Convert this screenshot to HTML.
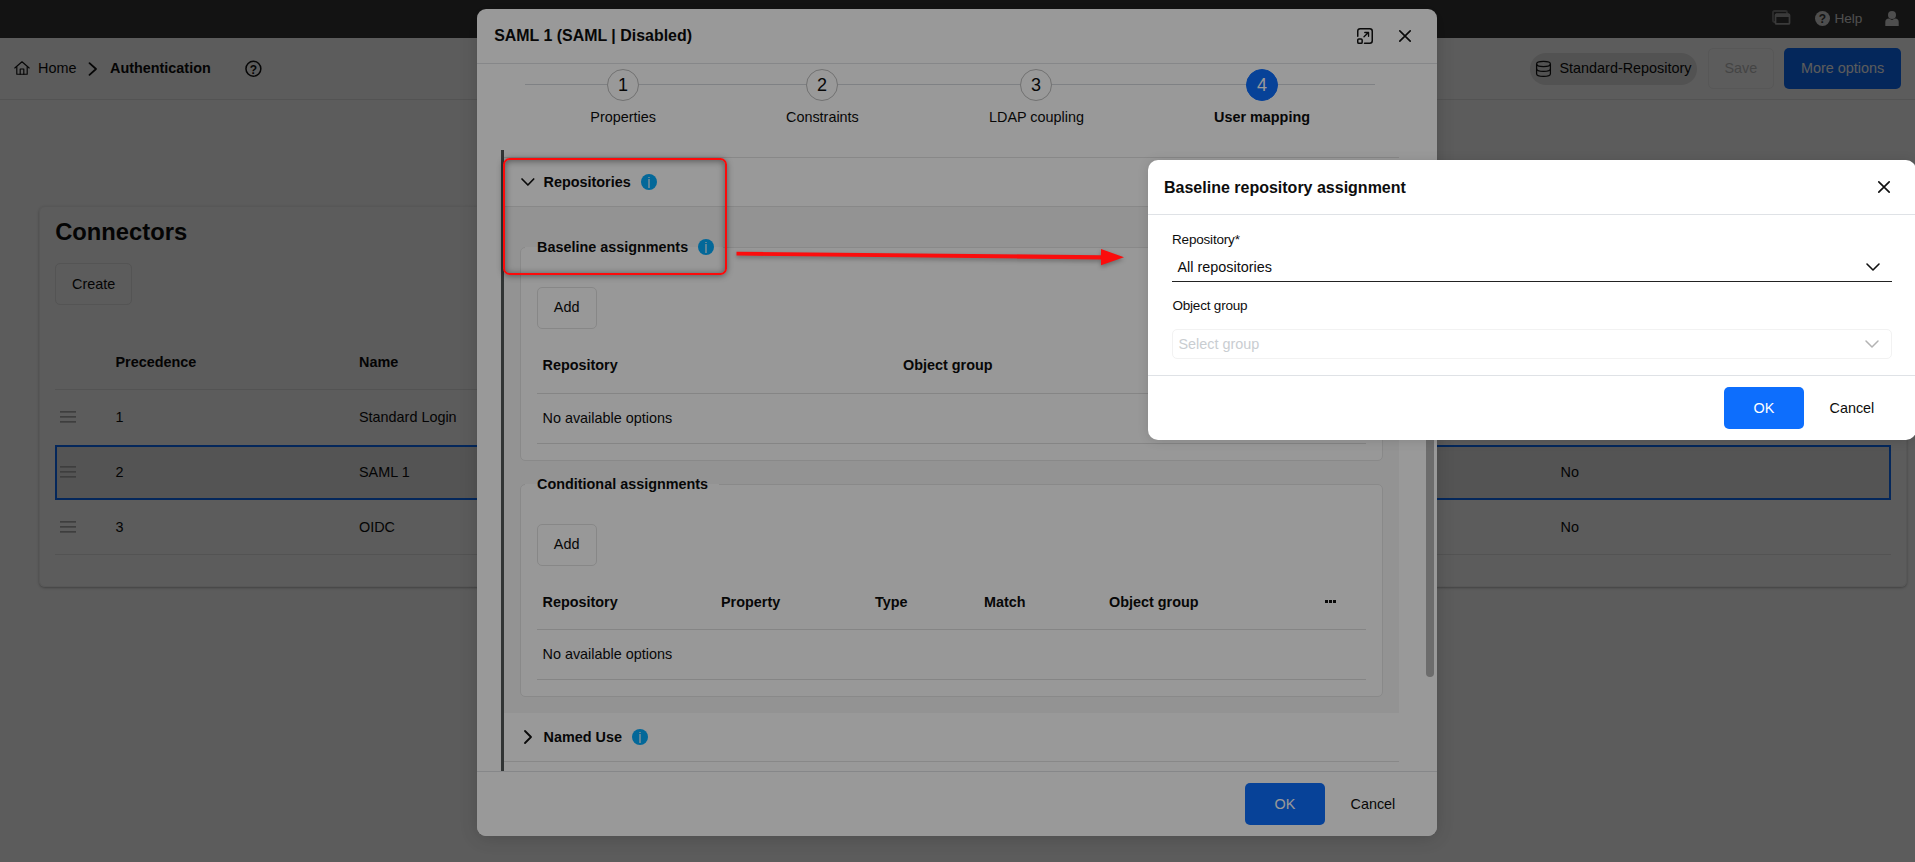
<!DOCTYPE html>
<html lang="en">
<head>
<meta charset="utf-8">
<title>Authentication</title>
<style>
*{box-sizing:border-box;margin:0;padding:0}
html,body{width:1915px;height:862px;overflow:hidden;background:#fff}
body{font-family:"Liberation Sans",sans-serif;font-size:14.4px;color:#0d0d0d;position:relative;line-height:1}
.abs{position:absolute}
.t{position:absolute;white-space:nowrap;line-height:1}
.b{font-weight:bold}
svg{position:absolute;overflow:visible}
/* ---------- page layer ---------- */
#topbar{position:absolute;left:0;top:0;width:1915px;height:38px;background:#383838}
#toolbar{position:absolute;left:0;top:38px;width:1915px;height:62px;border-bottom:1px solid #e6e6e6}
#card{position:absolute;left:39px;top:206px;width:1868px;height:381px;border:1px solid #f3f3f3;border-radius:6px;box-shadow:0 1px 2.5px rgba(0,0,0,.3)}
.btn{position:absolute;border:1px solid #e9e9e9;border-radius:5px;background:#fff}
.hl{position:absolute;height:1px;background:#e6e6e6}
.drag{position:absolute;width:16px;height:11.2px;background:linear-gradient(#adadad,#adadad) 0 0/16px 1.7px no-repeat,linear-gradient(#adadad,#adadad) 0 4.7px/16px 1.7px no-repeat,linear-gradient(#adadad,#adadad) 0 9.4px/16px 1.7px no-repeat}
.ov{position:absolute;left:0;top:0;width:1915px;height:862px;background:rgba(0,0,0,.4)}
/* ---------- modal 1 ---------- */
#m1{position:absolute;left:477px;top:9px;width:960px;height:827px;background:#fff;border-radius:9px;box-shadow:0 2px 18px rgba(0,0,0,.16);overflow:hidden}
#m1 .abs,#m1 .t,#m1 svg{position:absolute}
.step{position:absolute;top:60px;width:32px;height:32px;border-radius:50%;border:1px solid #bdbdbd;background:#fff;text-align:center;font-size:18px;line-height:30.4px}
.fs{position:absolute;border:1px solid #e5e5e5;border-radius:5px;background:#fdfdfd}
.leg{position:absolute;font-weight:bold;white-space:nowrap;line-height:1}
.info{position:absolute;width:16px;height:16px;border-radius:50%;background:#05adff}
.info:before{content:"";position:absolute;left:7.2px;top:2.6px;width:1.6px;height:1.7px;background:rgba(255,255,255,.6)}
.info:after{content:"";position:absolute;left:7.2px;top:5.2px;width:1.6px;height:8.6px;background:rgba(255,255,255,.6)}
/* ---------- modal 2 ---------- */
#m2{position:absolute;left:1148px;top:160px;width:768px;height:279.6px;background:#fff;border-radius:10px;box-shadow:0 1px 12px rgba(0,0,0,.12)}
</style>
</head>
<body>
<!-- ================= PAGE ================= -->
<div id="topbar">
  <!-- window icon -->
  <svg style="left:1772px;top:10px" width="19" height="15" viewBox="0 0 19 15"><rect x="1" y="1" width="14" height="11" rx="1.5" fill="none" stroke="#7c7c7c" stroke-width="1.8"/><rect x="3.5" y="4.3" width="14" height="9.6" rx="1" fill="#383838" stroke="#a4a4a4" stroke-width="1.7"/><rect x="3.5" y="3.6" width="14" height="3.4" rx="0.8" fill="#a4a4a4"/></svg>
  <!-- help -->
  <svg style="left:1815px;top:11px" width="15" height="15" viewBox="0 0 15 15"><circle cx="7.5" cy="7.5" r="7.5" fill="#d9d9d9"/><text x="7.5" y="12" font-family="Liberation Sans" font-weight="bold" font-size="12" text-anchor="middle" fill="#383838">?</text></svg>
  <div class="t" style="left:1834.4px;top:12.2px;font-size:13.6px;color:#dcdcdc">Help</div>
  <!-- user -->
  <svg style="left:1885px;top:11px" width="14" height="15" viewBox="0 0 14 15"><circle cx="7" cy="4" r="4" fill="#d9d9d9"/><path d="M0.3 15 V11 Q0.3 7.6 4 7.4 L7 9 L10 7.4 Q13.7 7.6 13.7 11 V15 Z" fill="#d9d9d9"/></svg>
</div>
<div id="toolbar">
  <!-- home icon -->
  <svg style="left:14px;top:22.6px" width="16" height="14" viewBox="0 0 16 14" fill="none" stroke="#111" stroke-width="1.15" stroke-linejoin="round" stroke-linecap="round"><path d="M0.8 7 L8 0.8 L15.2 7"/><path d="M2.8 5.8 V13.2 H13.2 V5.8"/><path d="M6.2 13.2 V8 H9.8 V13.2"/></svg>
  <div class="t" style="left:38px;top:23px">Home</div>
  <svg style="left:88.3px;top:24px" width="10" height="14" viewBox="0 0 10 14" fill="none" stroke="#111" stroke-width="1.8" stroke-linecap="round" stroke-linejoin="round"><path d="M1.5 1.2 L8 7 L1.5 12.8"/></svg>
  <div class="t b" style="left:110px;top:23px">Authentication</div>
  <svg style="left:245px;top:22px" width="17" height="18" viewBox="0 0 17 18"><circle cx="8.4" cy="8.75" r="7.45" fill="none" stroke="#111" stroke-width="1.5"/><text x="8.4" y="13.5" font-family="Liberation Sans" font-weight="bold" font-size="12" text-anchor="middle" fill="#111">?</text></svg>
  <!-- repo pill -->
  <div class="abs" style="left:1530px;top:15px;width:167px;height:32px;border-radius:16px;background:#e4e4e4"></div>
  <svg style="left:1536px;top:22px" width="15" height="17" viewBox="0 0 15 17" fill="none" stroke="#111" stroke-width="1.25"><ellipse cx="7.5" cy="3.9" rx="6.9" ry="2.6"/><path d="M0.6 3.9 V13.7 C0.6 17.2 14.4 17.2 14.4 13.7 V3.9"/><path d="M0.6 8.7 C0.6 12.2 14.4 12.2 14.4 8.7"/></svg>
  <div class="t" style="left:1559.5px;top:23px">Standard-Repository</div>
  <div class="btn" style="left:1707.5px;top:10px;width:66px;height:41px;border-color:#f3f3f3"></div>
  <div class="t" style="left:1724.5px;top:23px;color:#bfbfbf">Save</div>
  <div class="abs" style="left:1784px;top:10px;width:117px;height:41px;border-radius:5px;background:#0d6efd"></div>
  <div class="t" style="left:1801px;top:23px;color:#fff">More options</div>
</div>
<div id="card">
  <div class="t b" style="left:15.2px;top:12.7px;font-size:23.76px">Connectors</div>
  <div class="btn" style="left:15px;top:56px;width:77px;height:42px"></div>
  <div class="t" style="left:32px;top:70px">Create</div>
  <div class="t b" style="left:75.5px;top:148px">Precedence</div>
  <div class="t b" style="left:319px;top:148px">Name</div>
  <div class="hl" style="left:15px;top:182px;width:1836px"></div>
  <div class="drag" style="left:20px;top:204.4px"></div>
  <div class="t" style="left:75.5px;top:203px">1</div>
  <div class="t" style="left:319px;top:203px">Standard Login</div>
  <div class="abs" style="left:15px;top:238px;width:1836px;height:55px;border:2px solid #0d6efd;background:#eaeaea"></div>
  <div class="drag" style="left:20px;top:259.4px"></div>
  <div class="t" style="left:75.5px;top:258px">2</div>
  <div class="t" style="left:319px;top:258px">SAML 1</div>
  <div class="t" style="left:1520.5px;top:258px">No</div>
  <div class="drag" style="left:20px;top:314.4px"></div>
  <div class="t" style="left:75.5px;top:313px">3</div>
  <div class="t" style="left:319px;top:313px">OIDC</div>
  <div class="t" style="left:1520.5px;top:313px">No</div>
  <div class="hl" style="left:15px;top:347px;width:1836px"></div>
</div>
<div class="ov" id="ov1"></div>
<!-- ================= MODAL 1 ================= -->
<div id="m1">
  <div class="t b" style="left:17.2px;top:18.5px;font-size:15.95px">SAML 1 (SAML | Disabled)</div>
  <!-- expand icon -->
  <svg style="left:880px;top:19px" width="16" height="16" viewBox="0 0 16 16" fill="none" stroke="#111" stroke-width="1.5" stroke-linecap="round" stroke-linejoin="round"><path d="M0.75 8.3 V3.2 Q0.75 0.75 3.2 0.75 H12.8 Q15.25 0.75 15.25 3.2 V12.8 Q15.25 15.25 12.8 15.25 H7.5"/><rect x="0.75" y="11" width="4.4" height="4.25" rx="1.1"/><path d="M7 8.8 L11.4 4.6 M7.8 4.45 H11.55 V8.2" stroke-width="1.35"/></svg>
  <!-- close -->
  <svg style="left:922px;top:21px" width="12" height="12" viewBox="0 0 12 12" fill="none" stroke="#111" stroke-width="1.65" stroke-linecap="round"><path d="M0.8 0.8 L11.2 11.2 M11.2 0.8 L0.8 11.2"/></svg>
  <div class="abs" style="left:0;top:54px;width:960px;height:1px;background:#dfe2e5"></div>
  <!-- stepper -->
  <div class="abs" style="left:48px;top:75px;width:850px;height:1px;background:#d4d8dc"></div>
  <div class="step" style="left:130px">1</div>
  <div class="step" style="left:329px">2</div>
  <div class="step" style="left:543px">3</div>
  <div class="step" style="left:769px;background:#0d6efd;border-color:#0d6efd;color:#fff">4</div>
  <div class="t" style="left:113.3px;top:101px">Properties</div>
  <div class="t" style="left:309px;top:101px">Constraints</div>
  <div class="t" style="left:512px;top:101px">LDAP coupling</div>
  <div class="t b" style="left:737px;top:101px">User mapping</div>
  <!-- left bar -->
  <div class="abs" style="left:24px;top:141px;width:3px;height:622px;background:#525757"></div>
  <!-- accordion: repositories -->
  <div class="abs" style="left:27px;top:148px;width:895px;height:1px;background:#e3e3e3"></div>
  <div class="abs" style="left:27px;top:197px;width:895px;height:1px;background:#e3e3e3"></div>
  <div class="abs" style="left:27px;top:198px;width:895px;height:506px;background:#f6f6f6"></div>
  <svg style="left:44px;top:168.7px" width="14" height="8" viewBox="0 0 14 8" fill="none" stroke="#111" stroke-width="1.7" stroke-linecap="round" stroke-linejoin="round"><path d="M1 1 L6.9 7 L12.7 1"/></svg>
  <div class="t b" style="left:66.5px;top:166px">Repositories</div>
  <div class="info" style="left:164px;top:165px"></div>
  <!-- fieldset 1 -->
  <div class="fs" style="left:43px;top:238px;width:862.5px;height:213.5px"></div>
  <div class="abs" style="left:48px;top:238px;width:198px;height:1px;background:#fdfdfd"></div>
  <div class="leg" style="left:60px;top:231px">Baseline assignments</div>
  <div class="info" style="left:221px;top:230px"></div>
  <div class="btn" style="left:60px;top:278px;width:60px;height:42px;border-color:#e2e2e2;background:#fdfdfd"></div>
  <div class="t" style="left:76.8px;top:291.4px">Add</div>
  <div class="t b" style="left:65.5px;top:349px">Repository</div>
  <div class="t b" style="left:426px;top:349px">Object group</div>
  <div class="hl" style="left:60px;top:384px;width:829px;background:#dedede"></div>
  <div class="t" style="left:65.5px;top:402px">No available options</div>
  <div class="hl" style="left:60px;top:434px;width:829px;background:#dedede"></div>
  <!-- fieldset 2 -->
  <div class="fs" style="left:43px;top:475px;width:862.5px;height:212.5px"></div>
  <div class="abs" style="left:48px;top:475px;width:194px;height:1px;background:#fdfdfd"></div>
  <div class="leg" style="left:60px;top:468px">Conditional assignments</div>
  <div class="btn" style="left:60px;top:515px;width:60px;height:42px;border-color:#e2e2e2;background:#fdfdfd"></div>
  <div class="t" style="left:76.8px;top:528.4px">Add</div>
  <div class="t b" style="left:65.5px;top:586px">Repository</div>
  <div class="t b" style="left:244px;top:586px">Property</div>
  <div class="t b" style="left:398px;top:586px">Type</div>
  <div class="t b" style="left:507px;top:586px">Match</div>
  <div class="t b" style="left:632px;top:586px">Object group</div>
  <div class="abs" style="left:848px;top:591px;width:2.6px;height:2.6px;background:#111;box-shadow:4px 0 0 #111,8px 0 0 #111"></div>
  <div class="hl" style="left:60px;top:620px;width:829px;background:#dedede"></div>
  <div class="t" style="left:65.5px;top:638px">No available options</div>
  <div class="hl" style="left:60px;top:670px;width:829px;background:#dedede"></div>
  <!-- accordion: named use -->
  <svg style="left:47px;top:721px" width="8" height="14" viewBox="0 0 8 14" fill="none" stroke="#111" stroke-width="1.85" stroke-linecap="round" stroke-linejoin="round"><path d="M1 1 L7 7 L1 13"/></svg>
  <div class="t b" style="left:66.5px;top:721px">Named Use</div>
  <div class="info" style="left:155px;top:720px"></div>
  <div class="abs" style="left:27px;top:752px;width:895px;height:1px;background:#e3e3e3"></div>
  <!-- scrollbar -->
  <div class="abs" style="left:949px;top:400px;width:8px;height:268px;border-radius:4px;background:#b4b4b4"></div>
  <!-- footer -->
  <div class="abs" style="left:0;top:762px;width:960px;height:65px;background:#fff;border-top:1px solid #dfe2e5"></div>
  <div class="abs" style="left:768px;top:774px;width:80px;height:42px;border-radius:5px;background:#0d6efd"></div>
  <div class="t" style="left:797.5px;top:788px;color:#fff">OK</div>
  <div class="t" style="left:873.5px;top:788px">Cancel</div>
</div>
<div class="ov" id="ov2"></div>
<!-- ================= MODAL 2 ================= -->
<div id="m2">
  <div class="t b" style="left:16px;top:19.5px;font-size:16px">Baseline repository assignment</div>
  <svg style="left:730px;top:21px" width="12" height="12" viewBox="0 0 12 12" fill="none" stroke="#111" stroke-width="1.65" stroke-linecap="round"><path d="M0.8 0.8 L11.2 11.2 M11.2 0.8 L0.8 11.2"/></svg>
  <div class="abs" style="left:0;top:54px;width:768px;height:1px;background:#dfe2e6"></div>
  <div class="t" style="left:24px;top:73.2px;font-size:13.5px;letter-spacing:-0.19px">Repository*</div>
  <div class="t" style="left:29.5px;top:100px">All repositories</div>
  <svg style="left:718px;top:103px" width="14" height="8" viewBox="0 0 14 8" fill="none" stroke="#111" stroke-width="1.6" stroke-linecap="round" stroke-linejoin="round"><path d="M1 1 L7 7 L13 1"/></svg>
  <div class="abs" style="left:24px;top:121px;width:720px;height:1.3px;background:#222"></div>
  <div class="t" style="left:24.4px;top:139.4px;font-size:13.5px;letter-spacing:-0.19px">Object group</div>
  <div class="abs" style="left:24px;top:169.2px;width:720px;height:29.4px;border:1px solid #f2f2f2;border-radius:5px"></div>
  <div class="t" style="left:30.5px;top:177px;color:#c9cdd1">Select group</div>
  <svg style="left:717px;top:180px" width="14" height="8" viewBox="0 0 14 8" fill="none" stroke="#b3b3b3" stroke-width="1.5" stroke-linecap="round" stroke-linejoin="round"><path d="M1 1 L7 7 L13 1"/></svg>
  <div class="abs" style="left:0;top:215px;width:768px;height:1px;background:#dfe2e6"></div>
  <div class="abs" style="left:576px;top:227px;width:80px;height:42px;border-radius:5px;background:#0d6efd"></div>
  <div class="t" style="left:605.5px;top:241px;color:#fff">OK</div>
  <div class="t" style="left:681.5px;top:241px">Cancel</div>
</div>
<!-- ================= ANNOTATIONS ================= -->
<div id="anno">
  <div class="abs" style="left:503.4px;top:158px;width:223.6px;height:116.6px;border:2.5px solid #fc0a0a;border-radius:6.5px;box-shadow:0 1px 6px rgba(0,0,0,.42),inset 0 1px 7px rgba(0,0,0,.45)"></div>
  <svg style="left:0;top:0" width="1915" height="862" viewBox="0 0 1915 862"><g style="filter:drop-shadow(0 2px 2px rgba(0,0,0,.3))"><path d="M736.5 251.8 L1101 255.2 L1101 249 L1124 257.3 L1101 265.3 L1101 259.4 L736.5 255.6 Z" fill="#fb0d0d"/></g></svg>
</div>
</body>
</html>
